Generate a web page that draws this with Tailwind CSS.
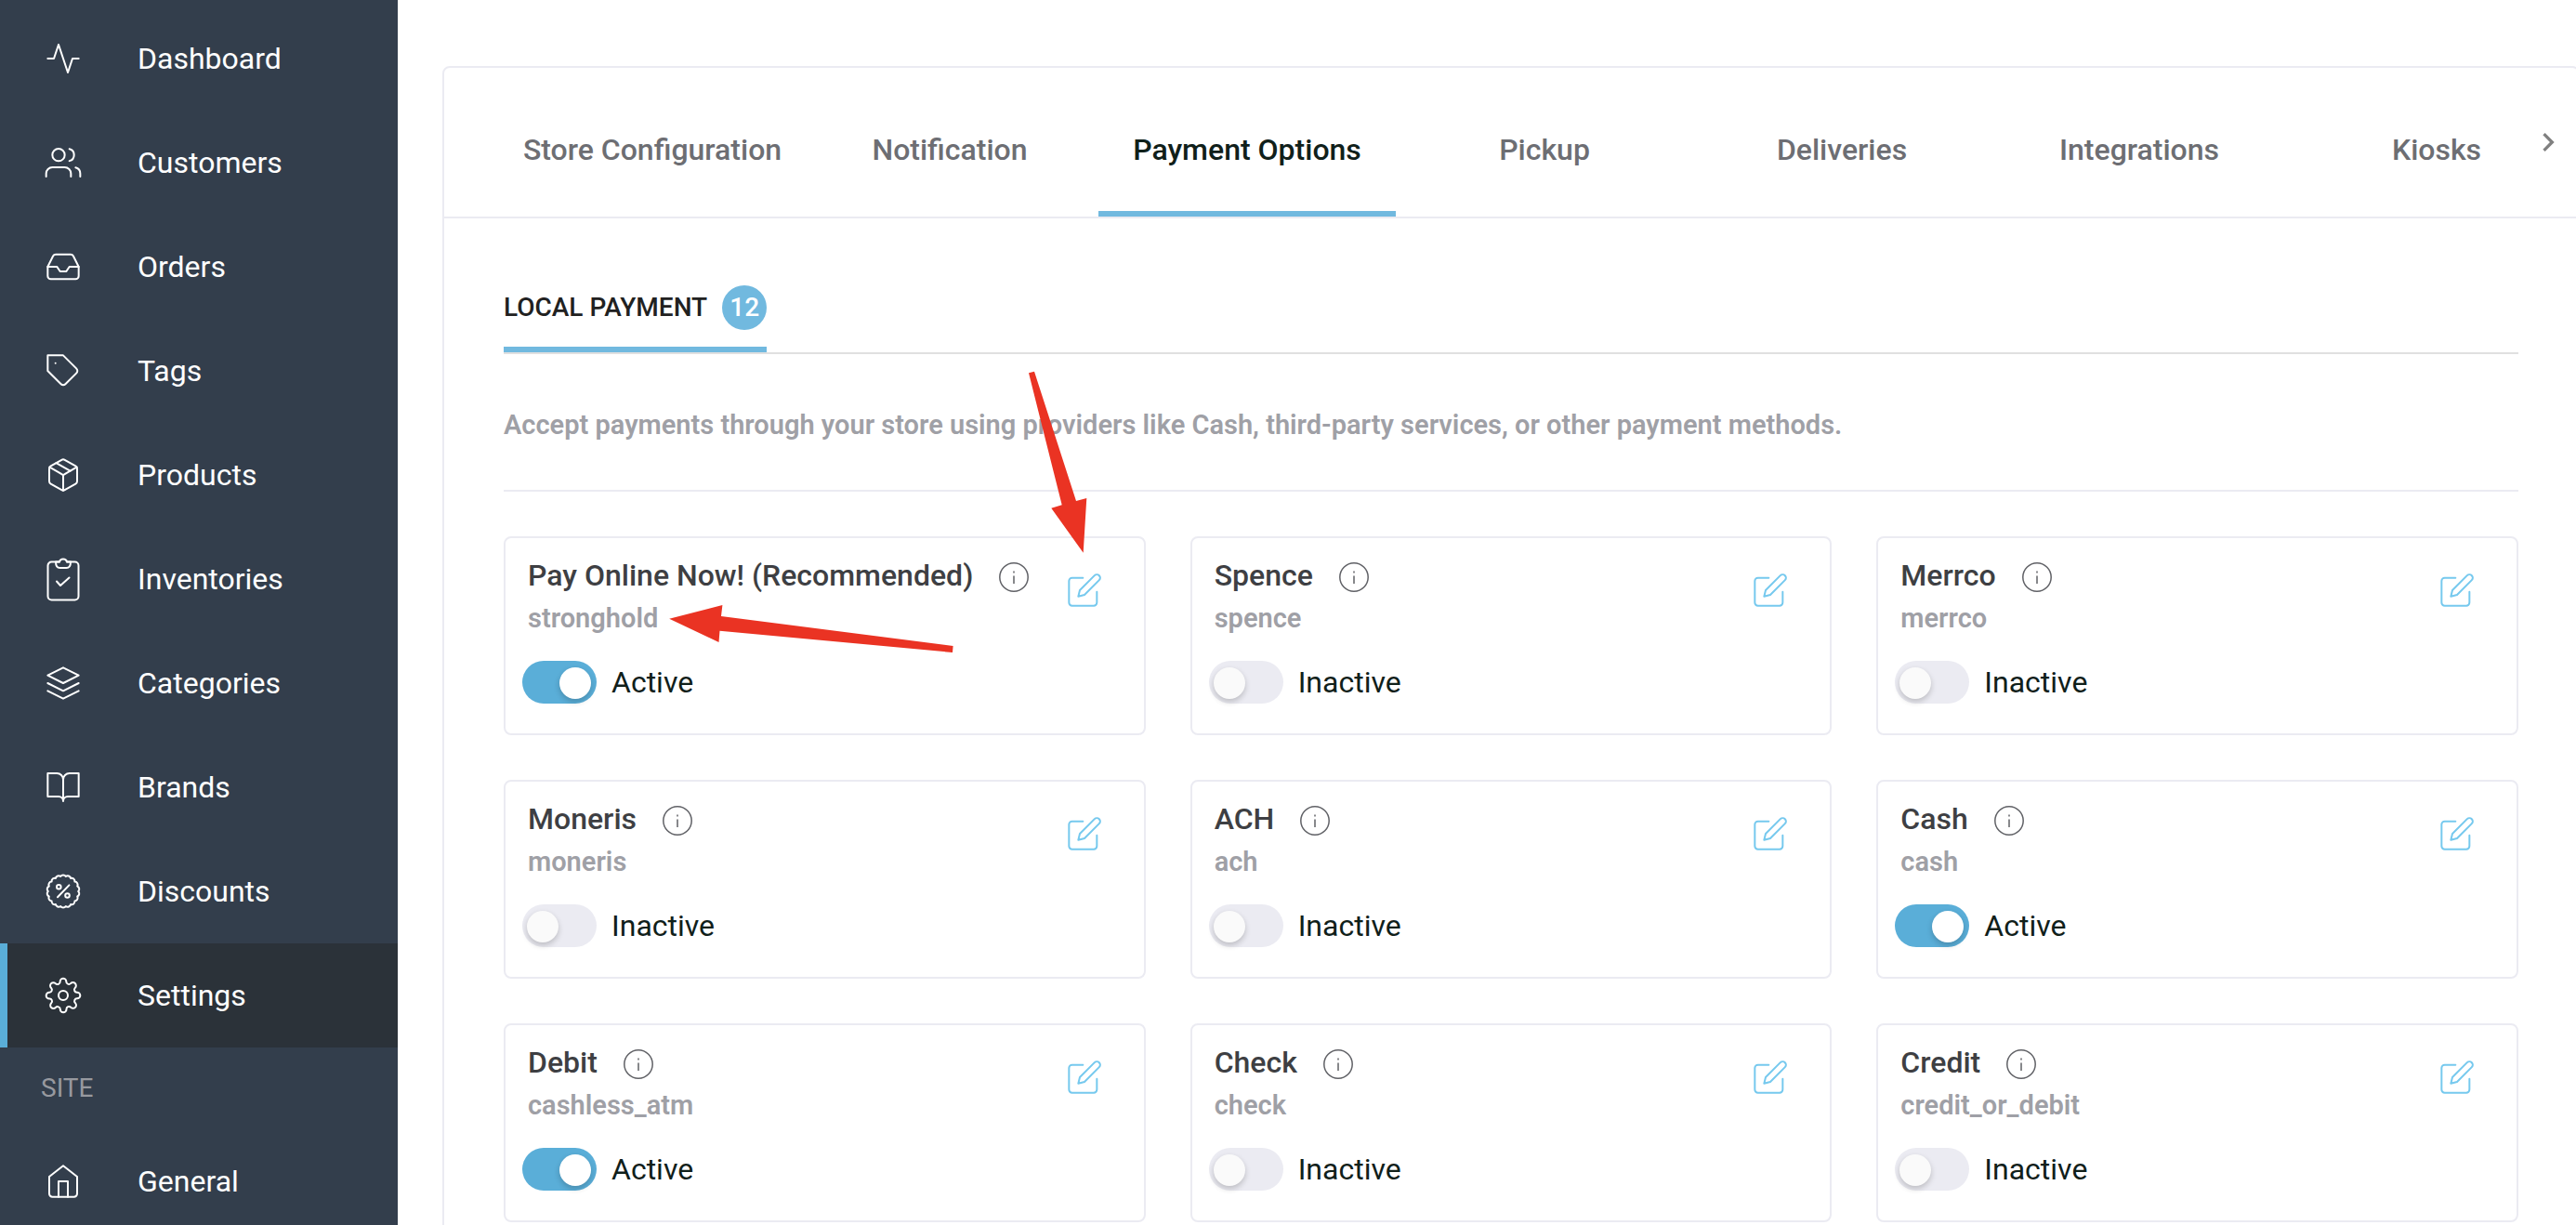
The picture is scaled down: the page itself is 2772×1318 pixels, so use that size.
<!DOCTYPE html>
<html lang="en">
  <head>
    <meta charset="UTF-8" />
    <meta name="viewport" content="width=device-width, initial-scale=1.0" />
    <script src="https://cdn.jsdelivr.net/npm/@tailwindcss/browser@4"></script>
    <title>Settings - Payment Options</title>
  </head>
  <body class="bg-white font-['Roboto',sans-serif]">
    <div class="flex h-screen overflow-hidden">
      <!-- Sidebar -->
      <aside class="w-[428px] shrink-0 overflow-hidden bg-[#333e4c] pt-[7px] text-[32px] text-white">
        <nav>
          <a href="#" class="flex h-28 items-center gap-15 pl-12">
            <svg class="size-10" viewBox="0 0 24 24" fill="none" stroke="currentColor" stroke-width="1.2" stroke-linecap="round" stroke-linejoin="round">
              <path d="M22 12h-4l-3 9L9 3l-3 9H2" />
            </svg>
            Dashboard
          </a>
          <a href="#" class="flex h-28 items-center gap-15 pl-12">
            <svg class="size-10" viewBox="0 0 24 24" fill="none" stroke="currentColor" stroke-width="1.2" stroke-linecap="round" stroke-linejoin="round">
              <path d="M17 21v-2a4 4 0 0 0-4-4H5a4 4 0 0 0-4 4v2" />
              <circle cx="9" cy="7" r="4" />
              <path d="M23 21v-2a4 4 0 0 0-3-3.87M16 3.13a4 4 0 0 1 0 7.75" />
            </svg>
            Customers
          </a>
          <a href="#" class="flex h-28 items-center gap-15 pl-12">
            <svg class="size-10" viewBox="0 0 24 24" fill="none" stroke="currentColor" stroke-width="1.2" stroke-linecap="round" stroke-linejoin="round">
              <path d="M22 12h-6l-2 3h-4l-2-3H2" />
              <path d="M5.45 5.11L2 12v6a2 2 0 0 0 2 2h16a2 2 0 0 0 2-2v-6l-3.45-6.89A2 2 0 0 0 16.76 4H7.24a2 2 0 0 0-1.79 1.11z" />
            </svg>
            Orders
          </a>
          <a href="#" class="flex h-28 items-center gap-15 pl-12">
            <svg class="size-10" viewBox="0 0 24 24" fill="none" stroke="currentColor" stroke-width="1.2" stroke-linecap="round" stroke-linejoin="round">
              <path d="M20.59 13.41l-7.17 7.17a2 2 0 0 1-2.83 0L2 12V2h10l8.59 8.59a2 2 0 0 1 0 2.82z" />
              <path d="M7 7h.01" />
            </svg>
            Tags
          </a>
          <a href="#" class="flex h-28 items-center gap-15 pl-12">
            <svg class="size-10" viewBox="0 0 24 24" fill="none" stroke="currentColor" stroke-width="1.2" stroke-linecap="round" stroke-linejoin="round">
              <path d="M16.5 9.4l-9-5.19" />
              <path d="M21 16V8a2 2 0 0 0-1-1.73l-7-4a2 2 0 0 0-2 0l-7 4A2 2 0 0 0 3 8v8a2 2 0 0 0 1 1.73l7 4a2 2 0 0 0 2 0l7-4A2 2 0 0 0 21 16z" />
              <path d="M3.27 6.96L12 12.01l8.73-5.05M12 22.08V12" />
            </svg>
            Products
          </a>
          <a href="#" class="flex h-28 items-center gap-15 pl-12">
            <svg class="h-12 w-10" viewBox="0 0 40 48" fill="none" stroke="currentColor" stroke-width="2" stroke-linecap="round" stroke-linejoin="round">
              <path d="M16 5.5H7.5a4 4 0 0 0-4 4v33a4 4 0 0 0 4 4h25a4 4 0 0 0 4-4v-33a4 4 0 0 0-4-4H24" />
              <path d="M16 5.5c1-4 7-4 8 0h4c0 4-1.5 6.5-4.5 6.5h-7c-3 0-4.5-2.5-4.5-6.5z" />
              <path d="M13 26.5l4 4.5 9.5-8.5" />
            </svg>
            Inventories
          </a>
          <a href="#" class="flex h-28 items-center gap-15 pl-12">
            <svg class="size-10" viewBox="0 0 24 24" fill="none" stroke="currentColor" stroke-width="1.2" stroke-linecap="round" stroke-linejoin="round">
              <path d="M12 2L2 7l10 5 10-5-10-5zM2 17l10 5 10-5M2 12l10 5 10-5" />
            </svg>
            Categories
          </a>
          <a href="#" class="flex h-28 items-center gap-15 pl-12">
            <svg class="size-10" viewBox="0 0 24 24" fill="none" stroke="currentColor" stroke-width="1.2" stroke-linecap="round" stroke-linejoin="round">
              <path d="M2 3h6a4 4 0 0 1 4 4v14a3 3 0 0 0-3-3H2zM22 3h-6a4 4 0 0 0-4 4v14a3 3 0 0 1 3-3h7z" />
            </svg>
            Brands
          </a>
          <a href="#" class="flex h-28 items-center gap-15 pl-12">
            <svg class="size-10" viewBox="0 0 40 40" fill="none" stroke="currentColor" stroke-width="2" stroke-linecap="round" stroke-linejoin="round">
              <path d="M36.2 20A3.3 3.3 0 0 1 35.2 25.5A3.3 3.3 0 0 1 32.4 30.4A3.3 3.3 0 0 1 28.1 34A3.3 3.3 0 0 1 22.8 36A3.3 3.3 0 0 1 17.2 36A3.3 3.3 0 0 1 11.9 34A3.3 3.3 0 0 1 7.6 30.4A3.3 3.3 0 0 1 4.8 25.5A3.3 3.3 0 0 1 3.8 20A3.3 3.3 0 0 1 4.8 14.5A3.3 3.3 0 0 1 7.6 9.6A3.3 3.3 0 0 1 11.9 6A3.3 3.3 0 0 1 17.2 4A3.3 3.3 0 0 1 22.8 4A3.3 3.3 0 0 1 28.1 6A3.3 3.3 0 0 1 32.4 9.6A3.3 3.3 0 0 1 35.2 14.5A3.3 3.3 0 0 1 36.2 20z" />
              <circle cx="15.3" cy="15.3" r="2.3" />
              <circle cx="24.5" cy="24.5" r="2.3" />
              <path d="M14 26.2l12.4-12.8" />
            </svg>
            Discounts
          </a>
          <a href="#" aria-current="page" class="flex h-28 items-center gap-15 border-l-8 border-[#5aaed8] bg-[#2b3239] pl-10">
            <svg class="size-10" viewBox="0 0 24 24" fill="none" stroke="currentColor" stroke-width="1.2" stroke-linecap="round" stroke-linejoin="round">
              <circle cx="12" cy="12" r="3" />
              <path d="M19.4 15a1.65 1.65 0 0 0 .33 1.82l.06.06a2 2 0 0 1 0 2.83 2 2 0 0 1-2.83 0l-.06-.06a1.65 1.65 0 0 0-1.82-.33 1.65 1.65 0 0 0-1 1.51V21a2 2 0 0 1-2 2 2 2 0 0 1-2-2v-.09A1.65 1.65 0 0 0 9 19.4a1.65 1.65 0 0 0-1.82.33l-.06.06a2 2 0 0 1-2.83 0 2 2 0 0 1 0-2.83l.06-.06a1.65 1.65 0 0 0 .33-1.82 1.65 1.65 0 0 0-1.51-1H3a2 2 0 0 1-2-2 2 2 0 0 1 2-2h.09A1.65 1.65 0 0 0 4.6 9a1.65 1.65 0 0 0-.33-1.82l-.06-.06a2 2 0 0 1 0-2.83 2 2 0 0 1 2.83 0l.06.06a1.65 1.65 0 0 0 1.82.33H9a1.65 1.65 0 0 0 1-1.51V3a2 2 0 0 1 2-2 2 2 0 0 1 2 2v.09a1.65 1.65 0 0 0 1 1.51 1.65 1.65 0 0 0 1.82-.33l.06-.06a2 2 0 0 1 2.83 0 2 2 0 0 1 0 2.83l-.06.06a1.65 1.65 0 0 0-.33 1.82V9a1.65 1.65 0 0 0 1.51 1H21a2 2 0 0 1 2 2 2 2 0 0 1-2 2h-.09a1.65 1.65 0 0 0-1.51 1z" />
            </svg>
            Settings
          </a>
          <h2 class="flex h-22 items-center pl-11 text-[28px] text-[#97999f]">SITE</h2>
          <a href="#" class="flex h-28 items-center gap-15 pl-12">
            <svg class="size-10" viewBox="0 0 24 24" fill="none" stroke="currentColor" stroke-width="1.2" stroke-linecap="round" stroke-linejoin="round">
              <path d="M3 9l9-7 9 7v11a2 2 0 0 1-2 2H5a2 2 0 0 1-2-2z" />
              <path d="M9 22V12h6v10" />
            </svg>
            General
          </a>
        </nav>
      </aside>

      <!-- Main -->
      <main class="relative min-w-0 flex-1 overflow-hidden pt-[71px] pl-12">
        <div class="-mr-1 rounded-lg border-2 border-[#ebebf2]">
          <!-- Tabs -->
          <div class="flex border-b-2 border-[#ebebf2] pl-16">
            <div class="flex min-w-0 flex-1 overflow-hidden text-[32px] font-medium text-[#6d6e73]">
              <button class="h-40 w-80 shrink-0 border-b-[6px] border-transparent pt-[22px]">Store Configuration</button>
              <button class="h-40 w-80 shrink-0 border-b-[6px] border-transparent pt-[22px]">Notification</button>
              <button class="h-40 w-80 shrink-0 border-b-[6px] border-[#71b9df] pt-[22px] text-[#10201a]">Payment Options</button>
              <button class="h-40 w-80 shrink-0 border-b-[6px] border-transparent pt-[22px]">Pickup</button>
              <button class="h-40 w-80 shrink-0 border-b-[6px] border-transparent pt-[22px]">Deliveries</button>
              <button class="h-40 w-80 shrink-0 border-b-[6px] border-transparent pt-[22px]">Integrations</button>
              <button class="h-40 w-80 shrink-0 border-b-[6px] border-transparent pt-[22px]">Kiosks</button>
            </div>
            <button aria-label="Next tabs" class="flex w-16 items-center justify-center text-[#808080]">
              <svg class="size-10" viewBox="0 0 24 24" fill="currentColor">
                <path d="M10 6L8.59 7.41 13.17 12l-4.58 4.59L10 18l6-6z" />
              </svg>
            </button>
          </div>

          <div class="px-16 pt-[72px] pb-16">
            <div class="flex border-b-2 border-[#e0e0e0]">
              <button class="flex items-center gap-4 border-b-[6px] border-[#71b9df] pb-[18px] text-[28px] font-medium text-[#212121]">
                LOCAL PAYMENT
                <span class="flex size-12 items-center justify-center rounded-full bg-[#71b9df] text-white">12</span>
              </button>
            </div>
            <p class="border-b-2 border-[#ebebf2] pt-14 pb-[50px] text-[29px] leading-10 font-semibold text-[#9fa0a6]">
              Accept payments through your store using providers like Cash, third-party services, or other payment methods.
            </p>
            <div id="payment-list" class="mt-12 grid grid-cols-3 gap-12"></div>
          </div>
        </div>

        <!-- Arrows -->
        <svg class="pointer-events-none absolute top-[390px] left-[272px] h-80 w-[480px]" viewBox="0 0 480 320" fill="#ea3323">
          <path d="M407 11.3L413 9.7 458 149 469.3 146 465.7 204.7 431.3 156.7 442.7 153.3z" />
          <path d="M20.2 275.7L77.4 261 76 273 325.6 305 325 312 74.5 288.7 73.5 301z" />
        </svg>
      </main>
    </div>

    <script>
      const payments = [
        { name: "Pay Online Now! (Recommended)", code: "stronghold", active: true },
        { name: "Spence", code: "spence", active: false },
        { name: "Merrco", code: "merrco", active: false },
        { name: "Moneris", code: "moneris", active: false },
        { name: "ACH", code: "ach", active: false },
        { name: "Cash", code: "cash", active: true },
        { name: "Debit", code: "cashless_atm", active: true },
        { name: "Check", code: "check", active: false },
        { name: "Credit", code: "credit_or_debit", active: false },
      ];

      const list = document.getElementById("payment-list");

      payments.forEach((item) => {
        const card = document.createElement("div");
        card.className = "flex items-start justify-between rounded-lg border-2 border-[#ebebf2] pt-5 pr-11 pb-8 pl-[18px]";
        card.innerHTML = `
          <div>
            <div class="flex h-10 items-center gap-7 pl-1.5">
              <h3 class="text-[32px] leading-10 font-medium whitespace-nowrap text-[#3e3f43]">${item.name}</h3>
              <button aria-label="About ${item.name}" class="mt-1 text-[#606166]">
                <svg class="size-8" viewBox="0 0 32 32" fill="none" stroke="currentColor" stroke-width="1.5">
                  <circle cx="16" cy="16" r="15.2" />
                  <path d="M16 9.5v2M16 14.5v8.5" />
                </svg>
              </button>
            </div>
            <p class="mt-1.5 pl-1.5 text-[29px] leading-10 font-semibold text-[#9fa0a6]">${item.code}</p>
            <div class="mt-[26px] flex items-center gap-4">
              <input
                type="checkbox"
                role="switch"
                id="switch-${item.code}"
                ${item.active ? "checked" : ""}
                class="relative h-[46px] w-20 appearance-none rounded-full bg-[#ebebf2] before:absolute before:top-[7px] before:left-[5px] before:size-[34px] before:rounded-full before:bg-[#fafafa] before:shadow-[0_3px_6px_rgba(0,0,0,0.2)] checked:bg-[#5aaed8] checked:before:left-10 checked:before:bg-white"
              />
              <label for="switch-${item.code}" class="text-[32px] leading-10 text-[#10201a]">${item.active ? "Active" : "Inactive"}</label>
            </div>
          </div>
          <button aria-label="Edit ${item.name}" class="mt-4 text-[#76c9ee]">
            <svg class="size-10" viewBox="0 0 24 24" fill="none" stroke="currentColor" stroke-width="1.2" stroke-linecap="round" stroke-linejoin="round">
              <path d="M11 4H4a2 2 0 0 0-2 2v14a2 2 0 0 0 2 2h14a2 2 0 0 0 2-2v-7" />
              <path d="M18.5 2.5a2.121 2.121 0 0 1 3 3L12 15l-4 1 1-4z" />
            </svg>
          </button>
        `;
        list.appendChild(card);
      });
    </script>
  </body>
</html>
